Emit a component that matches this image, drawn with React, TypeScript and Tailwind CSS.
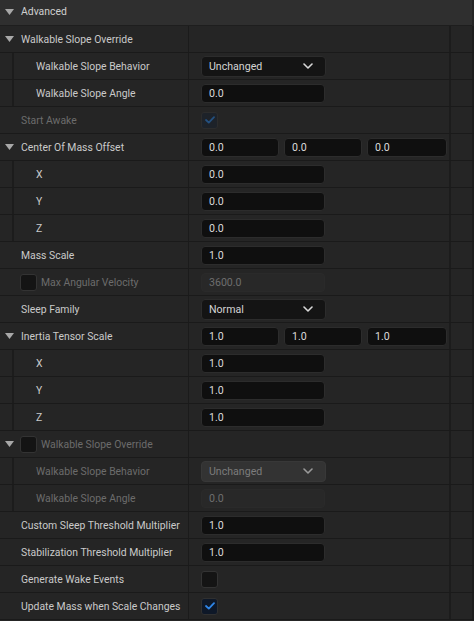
import React from "react";

const font = { fontFamily: "Roboto, 'Liberation Sans', sans-serif" };

function Tri({ dim }: { dim?: boolean }) {
  return (
    <svg width="9" height="6" viewBox="0 0 9 6" className="shrink-0">
      <path d="M0 0 H9 L4.5 6 Z" fill={dim ? "#8a8a8a" : "#a8a8a8"} />
    </svg>
  );
}

function Check({ dim }: { dim?: boolean }) {
  return (
    <svg width="10" height="8" viewBox="0 0 10 8">
      <path d="M1 4 L3.8 6.6 L9 1.2" fill="none" stroke={dim ? "#24507f" : "#2f86e8"} strokeWidth="1.8" strokeLinecap="round" strokeLinejoin="round" />
    </svg>
  );
}

function Box({ checked, dim }: { checked?: boolean; dim?: boolean }) {
  return (
    <div
      className={`w-[17px] h-[17px] rounded-[3px] flex items-center justify-center border ${
        dim ? "bg-[#1d2229] border-[#2c2c2c]" : checked ? "bg-[#0e1828] border-[#303030]" : "bg-[#141414] border-[#333333]"
      }`}
    >
      {checked && <Check dim={dim} />}
    </div>
  );
}

function Input({ v, w = "w-[124px]", dim }: { v: string; w?: string; dim?: boolean }) {
  return (
    <div
      className={`${w} h-[19px] rounded-[4px] flex items-center pl-[7px] text-[10.6px] border ${
        dim ? "bg-[#282828] border-[#2a2a2a] text-[#6e6e6e]" : "bg-[#0f0f0f] border-[#2c2c2c] text-[#dadada]"
      }`}
    >
      <span className="translate-y-[0.5px]">{v}</span>
    </div>
  );
}

function Chevron({ dim }: { dim?: boolean }) {
  return (
    <svg width="10" height="6" viewBox="0 0 10 6">
      <path d="M1 1 L5 5 L9 1" fill="none" stroke={dim ? "#9a9a9a" : "#d8d8d8"} strokeWidth="1.6" strokeLinecap="round" strokeLinejoin="round" />
    </svg>
  );
}

function Combo({ v, dim }: { v: string; dim?: boolean }) {
  return (
    <div
      className={`w-[125px] h-[21px] rounded-[4px] flex items-center justify-between pl-[7px] pr-[12px] text-[10.6px] border ${
        dim ? "bg-[#333333] border-[#383838] text-[#7c7c7c]" : "bg-[#141414] border-[#2c2c2c] text-[#d4d4d4]"
      }`}
    >
      <span className="translate-y-[0.5px]">{v}</span>
      <Chevron dim={dim} />
    </div>
  );
}

function Vec3({ v }: { v: string }) {
  return (
    <div className="flex gap-[5px]">
      <Input v={v} w="w-[78px]" />
      <Input v={v} w="w-[78px]" />
      <Input v={v} w="w-[80px]" />
    </div>
  );
}

type RowProps = {
  label: string;
  child?: boolean;
  tri?: boolean;
  cb?: "on" | "off";
  dim?: boolean;
  value?: React.ReactNode;
};

function Row({ label, child, tri, cb, dim, value }: RowProps) {
  return (
    <div className="flex h-[27px] border-b border-[#1a1a1a] bg-[#252525]">
      <div className="w-[189px] shrink-0 flex items-center border-r border-[#1b1b1b] relative">
        {child && <div className="w-[14px] h-full border-r-2 border-[#1c1c1c] shrink-0" />}
        <div className={`flex items-center h-full ${child ? "pl-[22px]" : "pl-[5px]"}`}>
          {tri ? (
            <div className="w-[16px] flex items-center">
              <Tri />
            </div>
          ) : (
            !child && <div className="w-[16px]" />
          )}
          {cb && (
            <div className="mr-[4px] -ml-[1px]">
              <Box checked={cb === "on"} />
            </div>
          )}
          <span className={`text-[10.4px] whitespace-nowrap translate-y-[1px] ${dim ? "text-[#6c6c6c]" : "text-[#cacaca]"}`}>
            {label}
          </span>
        </div>
      </div>
      <div className="w-[262px] shrink-0 flex items-center pl-[12px] border-r-2 border-[#1c1c1c]">{value}</div>
      <div className="flex-1 border-r-2 border-[#1d1d1d]" />
    </div>
  );
}

export default function App() {
  return (
    <div className="w-[474px] h-[621px] bg-[#252525] overflow-hidden" style={font}>
      <div className="h-[26px] flex items-center bg-[#2f2f2f] border-b border-[#1e1e1e] pl-[5px] mr-[2px]">
        <div className="w-[16px] flex items-center -translate-y-[1px]">
          <Tri />
        </div>
        <span className="text-[10.4px] text-[#cfcfcf] -translate-y-[1px]">Advanced</span>
      </div>
      <Row label="Walkable Slope Override" tri />
      <Row label="Walkable Slope Behavior" child value={<Combo v="Unchanged" />} />
      <Row label="Walkable Slope Angle" child value={<Input v="0.0" />} />
      <Row label="Start Awake" dim value={<Box checked dim />} />
      <Row label="Center Of Mass Offset" tri value={<Vec3 v="0.0" />} />
      <Row label="X" child value={<Input v="0.0" />} />
      <Row label="Y" child value={<Input v="0.0" />} />
      <Row label="Z" child value={<Input v="0.0" />} />
      <Row label="Mass Scale" value={<Input v="1.0" />} />
      <Row label="Max Angular Velocity" cb="off" dim value={<Input v="3600.0" dim />} />
      <Row label="Sleep Family" value={<Combo v="Normal" />} />
      <Row label="Inertia Tensor Scale" tri value={<Vec3 v="1.0" />} />
      <Row label="X" child value={<Input v="1.0" />} />
      <Row label="Y" child value={<Input v="1.0" />} />
      <Row label="Z" child value={<Input v="1.0" />} />
      <Row label="Walkable Slope Override" tri cb="off" dim />
      <Row label="Walkable Slope Behavior" child dim value={<Combo v="Unchanged" dim />} />
      <Row label="Walkable Slope Angle" child dim value={<Input v="0.0" dim />} />
      <Row label="Custom Sleep Threshold Multiplier" value={<Input v="1.0" />} />
      <Row label="Stabilization Threshold Multiplier" value={<Input v="1.0" />} />
      <Row label="Generate Wake Events" value={<Box />} />
      <Row label="Update Mass when Scale Changes" value={<Box checked />} />
    </div>
  );
}
